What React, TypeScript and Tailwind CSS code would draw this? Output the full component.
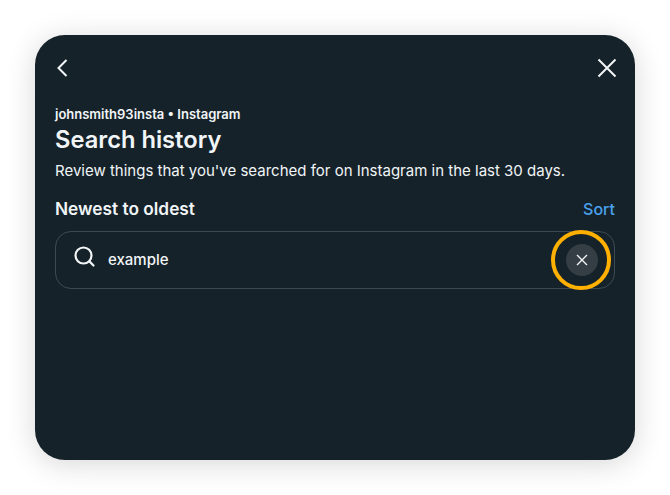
import React from 'react';

const App: React.FC = () => {
  return (
    <div className="w-[670px] h-[495px] bg-white pt-[35px] pl-[35px] font-['Inter',sans-serif] overflow-hidden">
      <div className="w-[600px] h-[425px] rounded-[30px] bg-[#162229] shadow-[0_4px_30px_rgba(0,0,0,0.16)] px-5 text-[#f1f5f7]">
        <div className="flex items-center justify-between h-[66px]">
          <svg width="24" height="24" viewBox="0 0 24 24" fill="none" stroke="#f1f5f7" strokeWidth="2" className="-ml-[2px]">
            <path d="M13.5 4 L5.5 12 L13.5 20" />
          </svg>
          <svg width="24" height="24" viewBox="0 0 24 24" fill="none" stroke="#f1f5f7" strokeWidth="2" className="-mr-[4px]">
            <path d="M3.5 3.5 L20.5 20.5 M20.5 3.5 L3.5 20.5" />
          </svg>
        </div>
        <div className="text-[13px] leading-4 font-semibold mt-[5px]">johnsmith93insta • Instagram</div>
        <h1 className="text-[23.7px] leading-7 font-semibold mt-[4px]">Search history</h1>
        <p className="text-[15px] leading-5 mt-[7px]">Review things that you've searched for on Instagram in the last 30 days.</p>
        <div className="flex items-center justify-between mt-[18px]">
          <span className="text-[17.3px] leading-5 font-semibold">Newest to oldest</span>
          <span className="text-[16px] leading-5 font-medium text-[#4aa3ee]">Sort</span>
        </div>
        <div className="relative flex items-center justify-between h-[58px] mt-[12px] rounded-[16px] border border-[#3b4a54] pl-[17px] pr-[16px]">
          <div className="flex items-center gap-[11px]">
            <svg width="24" height="24" viewBox="0 0 24 24" fill="none" stroke="#f1f5f7" strokeWidth="2.2" strokeLinecap="round" className="-mt-[6px]">
              <circle cx="10.5" cy="10.5" r="8" />
              <path d="M16.4 16.4 L20.5 20.5" />
            </svg>
            <span className="text-[15px] leading-5 font-medium">example</span>
          </div>
          <div className="w-8 h-8 rounded-full bg-[#343e44] flex items-center justify-center">
            <svg width="16" height="16" viewBox="0 0 16 16" fill="none" stroke="#f1f5f7" strokeWidth="1.4">
              <path d="M3 3 L13 13 M13 3 L3 13" />
            </svg>
          </div>
          <div className="absolute right-[3px] top-[-2px] w-[60px] h-[60px] rounded-full border-[4.5px] border-[#ffb000]" />
        </div>
      </div>
    </div>
  );
};

export default App;
